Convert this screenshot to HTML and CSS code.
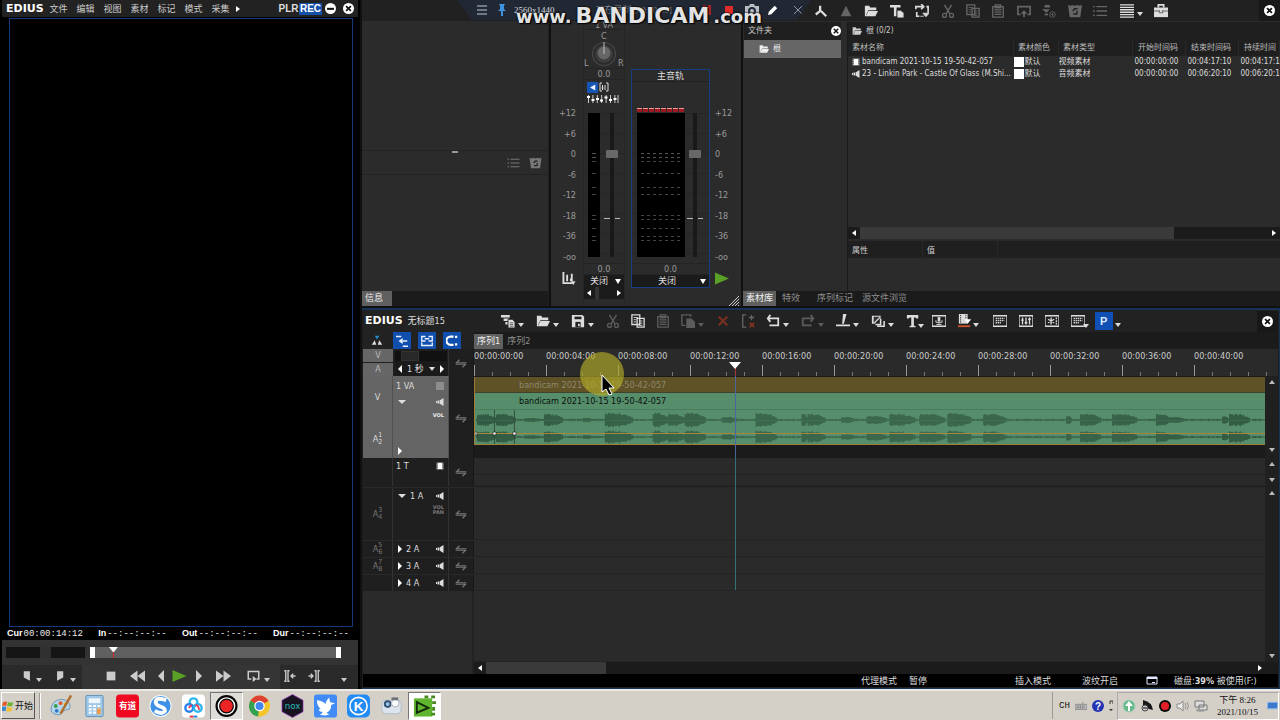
FILE: index.html
```html
<!DOCTYPE html>
<html lang="zh-CN">
<head>
<meta charset="utf-8">
<title>EDIUS</title>
<link rel="stylesheet" href="styles.css">
</head>
<body>
<svg class="defs" aria-hidden="true">
  <symbol id="close" viewBox="0 0 16 16"><circle cx="8" cy="8" r="8" fill="#fff"/><path d="M4.500 4.500l7 7m0-7l-7 7" stroke="#111" stroke-width="2.400"/></symbol>
  <symbol id="minus" viewBox="0 0 16 16"><circle cx="8" cy="8" r="8" fill="#fff"/><path d="M3 8.500h10" stroke="#111" stroke-width="3"/></symbol>
  <symbol id="folder" viewBox="0 0 16 16"><path d="M1 2h5l1 2h7v3H5l-2 4-1 3H1z" fill="currentColor"/><path d="M5 8h11l-3 6H2z" fill="currentColor"/></symbol>
  <symbol id="film" viewBox="0 0 16 16"><path d="M1 1h14v14H1z" fill="#aaa"/><path d="M4 2h8v12H4z" fill="#fff"/><path d="M2 2v12M14 2v12" stroke="#333" stroke-width="1.500" stroke-dasharray="2 2"/></symbol>
  <symbol id="speaker" viewBox="0 0 16 16"><path d="M15 0v16L7 11V5zM3 5h3v6H3zM0 6h2v4H0z" fill="currentColor"/></symbol>
  <symbol id="cut" viewBox="0 0 16 16"><path d="M4 1l6 10M12 1L6 11" stroke="currentColor" stroke-width="1.600" fill="none"/><circle cx="4" cy="13" r="2.200" fill="none" stroke="currentColor" stroke-width="1.500"/><circle cx="12" cy="13" r="2.200" fill="none" stroke="currentColor" stroke-width="1.500"/></symbol>
  <symbol id="copy" viewBox="0 0 16 16"><path d="M1 1h9v11H1zM7 5h8v10H7z" fill="#222" stroke="currentColor" stroke-width="1.500"/><path d="M3 4h5M3 6.500h3M3 9h3M9 8h4M9 10.500h4M9 13h4" stroke="currentColor"/></symbol>
  <symbol id="clipboard" viewBox="0 0 16 16"><path d="M2 3h12v12H2zM5 1h6v3H5z" fill="none" stroke="currentColor" stroke-width="1.500"/><path d="M4 6h8M4 8h8M4 10h8M4 12h8" stroke="currentColor" stroke-width="1.200"/></symbol>
  <symbol id="trash" viewBox="0 0 16 16"><path d="M0 1l2 14h12l2-14-3 1-2-1-3 1-3-1-2 1z" fill="currentColor"/><path d="M11 5.500H7.500L5.500 8M10.500 8l-.5 3.500H6" fill="none" stroke="#222" stroke-width="1.700"/></symbol>
  <symbol id="list" viewBox="0 0 16 16"><path d="M4 3h12M4 8h12M4 13h12" stroke="currentColor" stroke-width="1.500"/><path d="M0 3h2M0 8h2M0 13h2" stroke="currentColor" stroke-width="1.500"/></symbol>
  <symbol id="rows" viewBox="0 0 16 16"><path d="M0 1h16M0 3.800h16M0 6.600h16M0 9.400h16M0 12.200h16M0 15h16" stroke="currentColor" stroke-width="1.500"/></symbol>
  <symbol id="magnify" viewBox="0 0 16 16"><path d="M7 2v6l-5 4m6-4l6 6" stroke="currentColor" stroke-width="2.600" fill="none"/></symbol>
  <symbol id="up" viewBox="0 0 16 16"><path d="M8 2l6 12H2z" fill="currentColor"/></symbol>
  <symbol id="titlefile" viewBox="0 0 16 16"><path d="M0 1h12v3H7.500v10H4.500V4H0z" fill="currentColor"/><path d="M8 7h4l4 3v6H8z" fill="currentColor" stroke="#222"/></symbol>
  <symbol id="reload" viewBox="0 0 16 16"><path d="M1 6V3h8M7 0l3 3-3 3M13 3h2v7M5 14H2V9" fill="none" stroke="currentColor" stroke-width="1.900"/><path d="M6 14h4M9 10.500h7l-3.500 4z" fill="currentColor" stroke="currentColor"/></symbol>
  <symbol id="import" viewBox="0 0 16 16"><path d="M4 12H1V3h14v9h-3" fill="none" stroke="currentColor" stroke-width="1.800"/><path d="M8 7l4 4H9v4H7v-4H4z" fill="currentColor"/></symbol>
  <symbol id="addclip" viewBox="0 0 16 16"><path d="M3 1h6v3H3zM0 6h9L5 10z" fill="currentColor"/><path d="M3 12h4" stroke="currentColor" stroke-width="2"/><circle cx="12" cy="12" r="3.200" fill="none" stroke="currentColor"/><path d="M10.500 12h3M12 10.500v3" stroke="currentColor"/></symbol>
  <symbol id="case" viewBox="0 0 16 16"><path d="M5 4V1h6v3" fill="none" stroke="currentColor" stroke-width="2"/><path d="M0 4h16v11H0z" fill="currentColor"/><path d="M0 8h6M10 8h6M6 7v3h4V7" stroke="#555" fill="none"/></symbol>
  <symbol id="newseq" viewBox="0 0 16 16"><path d="M0 1h10v3H0zM3 5h6v3H3zM5 9h3v3H5z" fill="currentColor"/><path d="M8 6h5l3 3v7H8z" fill="currentColor" stroke="#222"/><path d="M10 10h4M10 12h4M10 14h4" stroke="#555"/></symbol>
  <symbol id="save" viewBox="0 0 16 16"><path d="M1 1h12l2 2v12H1z" fill="currentColor"/><path d="M4 3h8v3H4z" fill="#222"/><path d="M5 9h6v6H5z" fill="#222"/><path d="M8 11h2v3H8z" fill="currentColor"/></symbol>
  <symbol id="pastefile" viewBox="0 0 16 16"><path d="M5 13H1V1h10v2" fill="none" stroke="currentColor" stroke-width="1.600"/><path d="M6 5h6l4 4v7H6z" fill="currentColor"/></symbol>
  <symbol id="cross" viewBox="0 0 16 16"><path d="M3 3l10 10M13 3L3 13" stroke="currentColor" stroke-width="2.500"/></symbol>
  <symbol id="ripple" viewBox="0 0 16 16"><path d="M6 1H2v14h4M9 4h6M12 1v6" fill="none" stroke="#666" stroke-width="1.500"/><path d="M10 10l5 5m0-5l-5 5" stroke="#8a351d" stroke-width="1.800"/></symbol>
  <symbol id="undo" viewBox="0 0 16 16"><path d="M5 1L2 5l3 4M2 5h12v8H4" fill="none" stroke="currentColor" stroke-width="2"/></symbol>
  <symbol id="redo" viewBox="0 0 16 16"><path d="M11 1l3 4-3 4M14 5H2v8h10" fill="none" stroke="currentColor" stroke-width="2"/></symbol>
  <symbol id="razor" viewBox="0 0 16 16"><path d="M8 0h4L9 11H7zM0 12h16v2H0z" fill="currentColor"/></symbol>
  <symbol id="crop" viewBox="0 0 16 16"><path d="M1 2h10v2L4 11H1z" fill="currentColor"/><path d="M3 3v7l7-7z" fill="#333"/><path d="M11 5v7H5M7 14h8V8" stroke="currentColor" stroke-width="1.800" fill="none"/></symbol>
  <symbol id="title" viewBox="0 0 16 16"><path d="M1 1h13v4h-2l-1-1H9v9l2 1v1H4v-1l2-1V4H4L3 5H1z" fill="currentColor"/></symbol>
  <symbol id="mic" viewBox="0 0 16 16"><path d="M0 2h16v12H0z" fill="none" stroke="currentColor" stroke-width="1.600"/><path d="M6.500 3.500h3v5h-3z" fill="currentColor"/><path d="M4.500 7v2.500h7V7M8 9v3M5 12h6" fill="none" stroke="currentColor"/></symbol>
  <symbol id="render" viewBox="0 0 16 16"><path d="M1 0h10v11H1z" fill="currentColor"/><path d="M3 1v9M9 1v5" stroke="#222" stroke-dasharray="1.500 1"/><path d="M8 6h7l-4 5z" fill="#fff"/><path d="M0 14h14" stroke="#d4562b" stroke-width="2"/></symbol>
  <symbol id="panel" viewBox="0 0 16 16"><path d="M0 2h16v12H0z" fill="none" stroke="currentColor" stroke-width="1.500"/><path d="M3 5h10M3 7.500h10M3 10h6" stroke="currentColor" stroke-width="1.700" stroke-dasharray="1.500 .8"/></symbol>
  <symbol id="mixer" viewBox="0 0 16 16"><path d="M0 2h16v12H0z" fill="none" stroke="currentColor" stroke-width="1.500"/><path d="M4 4v8M8 4v8M12 4v8M2.500 7h3M6.500 10h3M10.500 6h3" stroke="currentColor" stroke-width="1.500"/></symbol>
  <symbol id="scope" viewBox="0 0 16 16"><path d="M0 2h16v12H0z" fill="none" stroke="currentColor" stroke-width="1.500"/><path d="M7 4v8M3.500 6l7 4M3.500 10l7-4M13 4v2M13 7v2M13 10v2" stroke="currentColor" stroke-width="1.500"/></symbol>
  <symbol id="swap" viewBox="0 0 16 12"><path d="M6 1L2 5h13M10 11l4-4H1" fill="none" stroke="currentColor" stroke-width="1.600"/></symbol>
  <symbol id="insync" viewBox="0 0 16 16"><path d="M5 1h6L8 6z" fill="#298bc8"/><path d="M1 13l4-6 2 6zM15 13l-4-6-2 6z" fill="#ddd"/></symbol>
  <symbol id="insert" viewBox="0 0 16 16"><path d="M0 2h7M9 15h7M5 8h10M9 5L5 8l4 3" fill="none" stroke="#e8f2ff" stroke-width="2"/></symbol>
  <symbol id="sync" viewBox="0 0 16 16"><path d="M6 2H1v6h5M10 2h5v6h-5M5 5h6M1 10v4h14v-4" fill="none" stroke="#e8f2ff" stroke-width="1.800"/></symbol>
  <symbol id="snap" viewBox="0 0 16 16"><path d="M10 2H6a5 5 0 0 0 0 11h4" fill="none" stroke="#fff" stroke-width="3"/><path d="M12 1h3v3h-3zM12 11h3v3h-3z" fill="#fff"/></symbol>
  <symbol id="marker" viewBox="0 0 16 16"><path d="M4 1h9v14L4 10z" fill="currentColor"/></symbol>
  <symbol id="stop" viewBox="0 0 16 16"><path d="M1 1h14v14H1z" fill="currentColor"/></symbol>
  <symbol id="rew" viewBox="0 0 16 12"><path d="M8 0v12L0 6zM16 0v12L8 6z" fill="currentColor"/></symbol>
  <symbol id="ff" viewBox="0 0 16 12"><path d="M0 0l8 6-8 6zM8 0l8 6-8 6z" fill="currentColor"/></symbol>
  <symbol id="prev" viewBox="0 0 8 12"><path d="M7 0v12L1 6z" fill="currentColor"/></symbol>
  <symbol id="next" viewBox="0 0 8 12"><path d="M1 0l6 6-6 6z" fill="currentColor"/></symbol>
  <symbol id="loop" viewBox="0 0 16 16"><path d="M5 12H1V2h14v10h-3" fill="none" stroke="currentColor" stroke-width="2"/><path d="M7 8l5 4-5 4z" fill="currentColor"/></symbol>
  <symbol id="goin" viewBox="0 0 16 16"><path d="M1 1h2v14H1M8 1H6v14h2M10 8h6M13 5l-3 3 3 3" fill="none" stroke="currentColor" stroke-width="1.800"/></symbol>
  <symbol id="goout" viewBox="0 0 16 16"><path d="M15 1h-2v14h2M8 1h2v14H8M0 8h6M3 5l3 3-3 3" fill="none" stroke="currentColor" stroke-width="1.800"/></symbol>
</svg>

<div class="desktop">
  <main class="workspace">
    <section class="player">
      <header class="player-head">
        <b class="brand">EDIUS</b>
        <nav class="menu"><button>文件</button><button>编辑</button><button>视图</button><button>素材</button><button>标记</button><button>模式</button><button>采集</button><i class="caret right"></i></nav>
        <button class="mode">PLR</button><button class="mode on">REC</button>
        <button class="round" aria-label="最小化"><svg><use href="#minus"/></svg></button>
        <button class="round" aria-label="关闭"><svg><use href="#close"/></svg></button>
      </header>
      <div class="screen"></div>
      <div class="timecodes"><span><b>Cur</b>00:00:14:12</span><span><b>In</b>--:--:--:--</span><span><b>Out</b>--:--:--:--</span><span><b>Dur</b>--:--:--:--</span></div>
      <div class="scrub">
        <input class="jog" type="range" value="50" aria-label="慢速搜索">
        <input class="seek" type="range" value="6" aria-label="播放位置">
      </div>
      <div class="transport">
        <div class="tgroup marks"><button aria-label="入点"><svg><use href="#marker"/></svg><i class="caret"></i></button><button class="flip" aria-label="出点"><svg><use href="#marker"/></svg><i class="caret"></i></button></div>
        <div class="tgroup plays"><button aria-label="停止"><svg class="i10"><use href="#stop"/></svg></button><button aria-label="快退"><svg><use href="#rew"/></svg></button><button aria-label="上一帧"><svg class="i10"><use href="#prev"/></svg></button><button class="go" aria-label="播放"><svg viewBox="0 0 14 12"><path d="M0 0l14 6-14 6z" fill="#5aa027"/></svg></button><button aria-label="下一帧"><svg class="i10"><use href="#next"/></svg></button><button aria-label="快进"><svg><use href="#ff"/></svg></button><button aria-label="循环"><svg><use href="#loop"/></svg><i class="caret"></i></button></div>
        <div class="tgroup edits"><button aria-label="到入点"><svg><use href="#goin"/></svg></button><button aria-label="到出点"><svg><use href="#goout"/></svg></button><button aria-label="更多"><i class="caret"></i></button></div>
      </div>
    </section>

    <div class="side">
      <div class="upper">
        <div class="toolbar">
          <div class="bin-tools">
            <button class="lit" aria-label="搜索"><svg><use href="#magnify"/></svg></button><button aria-label="向上"><svg><use href="#up"/></svg></button><button class="lit" aria-label="打开"><svg><use href="#folder"/></svg></button><button class="lit" aria-label="新建字幕"><svg><use href="#titlefile"/></svg></button><button class="lit" aria-label="新建素材"><svg><use href="#reload"/></svg></button><button aria-label="剪切"><svg><use href="#cut"/></svg></button><button aria-label="复制"><svg><use href="#copy"/></svg></button><button aria-label="粘贴"><svg><use href="#clipboard"/></svg></button><button aria-label="播放器"><svg><use href="#import"/></svg></button><button aria-label="添加"><svg><use href="#addclip"/></svg></button><button aria-label="删除"><svg><use href="#trash"/></svg></button><button aria-label="属性"><svg><use href="#list"/></svg></button><button class="lit" aria-label="视图"><svg><use href="#rows"/></svg><i class="caret"></i></button>
          </div>
          <button class="lit case" aria-label="工具"><svg><use href="#case"/></svg></button>
          <button class="round end" aria-label="关闭"><svg><use href="#close"/></svg></button>
        </div>
        <div class="capture">
          <svg class="c-menu" viewBox="0 0 10 10"><path d="M0 1h10M0 5h10M0 9h10" stroke="#bcc8d8"/></svg>
          <svg class="c-pin" viewBox="0 0 8 12"><path d="M1 0h6L6 2v3l2 2H0l2-2V2zM3 7h2v5H3z" fill="#3f92dc"/></svg>
          <span>2560x1440</span><span class="rec">正在录制 [00:00:50]</span>
          <svg class="c-pause" viewBox="0 0 8 10"><path d="M0 0h3v10H0zM5 0h3v10H5z" fill="#a82425"/></svg>
          <svg class="c-stop" viewBox="0 0 8 8"><path d="M0 0h8v8H0z" fill="#e12b2b"/></svg>
          <svg class="c-cam" viewBox="0 0 14 12"><path d="M0 2h4l1-2h4l1 2h4v10H0z" fill="#b9bdc4"/><circle cx="7" cy="7" r="3" fill="none" stroke="#222b3a" stroke-width="2"/></svg>
          <svg class="c-pen" viewBox="0 0 12 12"><path d="M0 12l1-4 7-7 3 3-7 7z" fill="#fff"/></svg>
          <svg class="c-x" viewBox="0 0 8 8"><path d="M0 0l8 8M8 0L0 8" stroke="#8f98a6"/></svg>
        </div>
        <div class="watermark"><small>www.</small><b>BANDICAM</b><em>.com</em></div>

        <div class="panels">
          <section class="info">
            <div class="info-top"></div>
            <div class="info-bar"><i class="grip"></i><svg><use href="#list"/></svg><svg><use href="#trash"/></svg></div>
            <div class="info-body"></div>
            <div class="tabs"><button class="on">信息</button></div>
          </section>

          <section class="mix">
            <div class="scale left"><ol><li>+12</li><li>+6</li><li>0</li><li>-6</li><li>-12</li><li>-18</li><li>-36</li><li>-oo</li></ol>
              <svg class="bars" viewBox="0 0 14 14"><path d="M0 0h2v11h10v2H0zM4 3h2v7H4zM8 7h1v3H8zM9 2h2v8H9z" fill="#ddd"/><path d="M9 10h5l-2.500 4z" fill="#ddd"/></svg></div>
            <div class="channel">
              <div class="ch-name">1 VA</div>
              <div class="pan"><svg viewBox="0 0 40 38"><circle cx="20" cy="24" r="11.500" fill="none" stroke="#484848" stroke-width="1.200"/><circle cx="20" cy="24" r="9" fill="#3c3c3c"/><circle cx="20" cy="23" r="6.500" fill="#666"/><path d="M20 12v12" stroke="#bbb"/><text x="17" y="9">C</text><text x="0" y="36">L</text><text x="34" y="36">R</text></svg></div>
              <div class="num">0.0</div>
              <div class="mutes"><button class="mute" aria-label="静音"><svg viewBox="0 0 8 8"><path d="M7 0v8L0 4z" fill="#eaf2ff"/></svg></button><button aria-label="独奏"><svg viewBox="0 0 10 10"><path d="M3 1H1v8h2M7 1h2v8H7M3.500 3v5M6 3v5M2.500 6h2" fill="none" stroke="#ddd"/></svg></button></div>
              <svg class="eq" viewBox="0 0 32 8"><path d="M1.500 0v8M5.900 0v8M10.300 0v8M14.700 0v8M19.100 0v8M23.500 0v8M27.900 0v8M31 0v8" stroke="#ccc"/><path d="M0 2h3M4.500 5h3M9 4h3M13 5.500h3M17.500 2.500h3M22 5h3M26.500 4h3" stroke="#fff" stroke-width="2"/></svg>
              <div class="fader"><div class="meter one"></div><div class="slide"><input type="range" value="73" aria-label="1 VA 音量"></div></div>
              <div class="num">0.0</div>
              <label class="pick"><select aria-label="1 VA 自动化"><option>关闭</option></select></label>
              <div class="mini-scroll"><i class="caret lefts"></i><b></b><i class="caret right"></i></div>
            </div>
            <div class="channel master">
              <div class="ch-name">主音轨</div>
              <div class="gap"></div>
              <div class="fader"><div class="meter eight"></div><div class="slide"><input type="range" value="73" aria-label="主音轨音量"></div></div>
              <div class="num">0.0</div>
              <label class="pick"><select aria-label="主音轨自动化"><option>关闭</option></select></label>
            </div>
            <div class="scale"><ol><li>+12</li><li>+6</li><li>0</li><li>-6</li><li>-12</li><li>-18</li><li>-36</li><li>-oo</li></ol>
              <svg class="bars" viewBox="0 0 14 12"><path d="M0 0l14 6-14 6z" fill="#5aa027"/></svg></div>
            <svg class="sizer" viewBox="0 0 10 10"><path d="M0 10L10 0M3 10l7-7M6 10l4-4M9 10l1-1" stroke="#ccc"/></svg>
          </section>

          <section class="bin">
            <div class="bin-main">
              <div class="tree">
                <div class="bin-head"><span>文件夹</span><button class="round" aria-label="关闭"><svg><use href="#close"/></svg></button></div>
                <div class="tree-row"><svg><use href="#folder"/></svg>根</div>
              </div>
              <div class="files">
                <div class="bin-head"><svg><use href="#folder"/></svg><span>根 (0/2)</span></div>
                <table class="clips">
                  <colgroup><col><col class="w45"><col class="w74"><col class="w53"><col class="w53"><col class="w40"></colgroup>
                  <thead><tr><th>素材名称</th><th>素材颜色</th><th>素材类型</th><th class="r">开始时间码</th><th class="r">结束时间码</th><th class="r">持续时间</th></tr></thead>
                  <tbody>
                    <tr><td><svg><use href="#film"/></svg>bandicam 2021-10-15 19-50-42-057</td><td><i class="chip"></i>默认</td><td>视频素材</td><td class="r">00:00:00:00</td><td class="r">00:04:17:10</td><td class="r">00:04:17:10</td></tr>
                    <tr><td><svg><use href="#speaker"/></svg>23 - Linkin Park - Castle Of Glass (M.Shi...</td><td><i class="chip"></i>默认</td><td>音频素材</td><td class="r">00:00:00:00</td><td class="r">00:06:20:10</td><td class="r">00:06:20:10</td></tr>
                  </tbody>
                </table>
                <div class="files-space"></div>
                <div class="hscroll"><i class="caret lefts"></i><b></b><i class="caret right"></i></div>
                <div class="props"><span>属性</span><span>值</span></div>
                <div class="props-body"></div>
              </div>
            </div>
            <div class="tabs"><button class="on">素材库</button><button>特效</button><button class="wide">序列标记</button><button>源文件浏览</button></div>
          </section>
        </div>
      </div>

      <section class="timeline">
        <div class="tl-head">
          <b class="brand">EDIUS</b><span class="project">无标题15</span>
          <div class="tools a"><button class="m"><svg><use href="#newseq"/></svg><i class="caret"></i></button><button class="m"><svg><use href="#folder"/></svg><i class="caret"></i></button><button class="m"><svg class="i13"><use href="#save"/></svg><i class="caret"></i></button><button class="dim"><svg><use href="#cut"/></svg></button><button><svg><use href="#copy"/></svg></button><button class="dim"><svg><use href="#clipboard"/></svg></button><button class="m dim"><svg><use href="#pastefile"/></svg><i class="caret"></i></button><button class="red"><svg><use href="#cross"/></svg></button><button><svg><use href="#ripple"/></svg></button><button class="m"><svg><use href="#undo"/></svg><i class="caret"></i></button><button class="m dim"><svg><use href="#redo"/></svg><i class="caret"></i></button><button class="m"><svg><use href="#razor"/></svg><i class="caret"></i></button><button class="m"><svg><use href="#crop"/></svg><i class="caret"></i></button></div>
          <div class="tools b"><button><svg><use href="#title"/></svg><i class="caret"></i></button><button><svg><use href="#mic"/></svg></button><button class="m"><svg><use href="#render"/></svg><i class="caret"></i></button><button><svg><use href="#panel"/></svg></button><button><svg><use href="#mixer"/></svg></button><button><svg><use href="#scope"/></svg></button><button><svg><use href="#panel"/></svg><i class="caret"></i></button><button class="m p"><b>P</b><i class="caret"></i></button></div>
          <button class="round end" aria-label="关闭"><svg><use href="#close"/></svg></button>
        </div>
        <div class="tl-modes">
          <div class="modes"><button class="plain"><svg><use href="#insync"/></svg></button><button><svg><use href="#insert"/></svg></button><button><svg><use href="#sync"/></svg></button><button><svg><use href="#snap"/></svg></button></div>
          <div class="tabs"><button class="on">序列1</button><button>序列2</button></div>
        </div>
        <div class="tl-body">
          <div class="row ruler-row">
            <div class="va"><button>V</button><button>A</button></div>
            <div class="zoom"><div class="zbar"><b></b></div><div class="zsel"><i class="caret lefts"></i><span>1 秒</span><i class="caret"></i><i class="caret right"></i></div></div>
            <div class="link"><svg><use href="#swap"/></svg></div>
            <div class="ruler"><span>00:00:00:00</span><span>00:00:04:00</span><span>00:00:08:00</span><span>00:00:12:00</span><span>00:00:16:00</span><span>00:00:20:00</span><span>00:00:24:00</span><span>00:00:28:00</span><span>00:00:32:00</span><span>00:00:36:00</span><span>00:00:40:00</span></div>
          </div>
          <div class="band">
            <div class="row va-row">
              <div class="patch lit2"><span>V</span><span class="ch">A<i><sup>1</sup><sub>2</sub></i></span></div>
              <div class="name lit2"><div><span>1 VA</span><svg class="grey" viewBox="0 0 8 8"><path d="M0 0h8v8H0z" fill="#8c8c8c"/></svg></div><div><i class="caret big"></i><svg><use href="#speaker"/></svg></div><div class="vol">VOL</div><div class="tail"><i class="caret right big"></i></div></div>
              <div class="link"><svg><use href="#swap"/></svg></div>
              <div class="lane clip-lane">
                <div class="clip">
                  <div class="video">bandicam 2021-10-15 19-50-42-057</div>
                  <div class="audio"><span>bandicam 2021-10-15 19-50-42-057</span><svg id="wave" viewBox="0 0 791 34" preserveAspectRatio="none"></svg></div>
                </div>
              </div>
            </div>
            <div class="vscroll"><i class="caret ups"></i><i class="caret"></i></div>
          </div>
          <div class="band t-band">
            <div class="row t-row"><div class="patch"></div><div class="name"><div><span>1 T</span><svg><use href="#film"/></svg></div></div><div class="link"><svg><use href="#swap"/></svg></div><div class="lane split"></div></div>
            <div class="vscroll"><i class="caret ups"></i><i class="caret"></i></div>
          </div>
          <div class="band rest">
            <div class="stack">
              <div class="row a1"><div class="patch"><span class="ch">A<i><sup>3</sup><sub>4</sub></i></span></div><div class="name"><div><i class="caret big"></i><span>1 A</span><svg><use href="#speaker"/></svg></div><div class="vol off">VOL<br>PAN</div></div><div class="link"><svg><use href="#swap"/></svg></div><div class="lane"></div></div>
              <div class="row an"><div class="patch"><span class="ch">A<i><sup>5</sup><sub>6</sub></i></span></div><div class="name"><div><i class="caret right big"></i><span>2 A</span><svg><use href="#speaker"/></svg></div></div><div class="link"><svg><use href="#swap"/></svg></div><div class="lane"></div></div>
              <div class="row an"><div class="patch"><span class="ch">A<i><sup>7</sup><sub>8</sub></i></span></div><div class="name"><div><i class="caret right big"></i><span>3 A</span><svg><use href="#speaker"/></svg></div></div><div class="link"><svg><use href="#swap"/></svg></div><div class="lane"></div></div>
              <div class="row an"><div class="patch"></div><div class="name"><div><i class="caret right big"></i><span>4 A</span><svg><use href="#speaker"/></svg></div></div><div class="link"><svg><use href="#swap"/></svg></div><div class="lane"></div></div>
              <div class="row fill"><div class="blank"></div><div class="lane"></div></div>
            </div>
            <div class="vscroll"><i class="caret ups"></i><i class="caret"></i></div>
          </div>
          <div class="bottom"><div class="blank"></div><div class="hscroll"><i class="caret lefts"></i><b></b><i class="caret right"></i></div></div>
          <div class="playhead"><i></i></div>
          <svg class="pointer" viewBox="0 0 44 44"><circle cx="22" cy="22" r="22" fill="#b0a82a" fill-opacity=".68"/><path d="M22 23v17l4-3 3 6 3-1-3-6h5z" fill="#000" stroke="#fff"/></svg>
        </div>
        <footer class="status"><span class="s1">代理模式</span><span class="s2">暂停</span><span class="s3">插入模式</span><span class="s4">波纹开启</span><svg viewBox="0 0 12 9"><path d="M1 1h10v7H1z" fill="none" stroke="#dfe8ff"/><path d="M1 1h10v2H1zM6 6h3v1H6z" fill="#dfe8ff"/></svg><span>磁盘:<b>39%</b> 被使用(F:)</span></footer>
      </section>
    </div>
  </main>

  <footer class="taskbar">
    <button class="start"><svg viewBox="0 0 14 14"><path d="M1 3q3-2 5-1L5 7Q3 6 0 7z" fill="#e4572b"/><path d="M7 2q3 2 6 0l-1 5q-3 1-6 0z" fill="#71b33a"/><path d="M0 8q3-1 5 0l-1 5q-3-1-4 0z" fill="#3884d0"/><path d="M6 8q3 2 6 0l-1 5q-3 1-6 0z" fill="#f4bd2c"/></svg>开始</button>
    <i class="sep"></i>
    <div class="apps">
      <button aria-label="画图"><svg viewBox="0 0 24 24"><path d="M1 15Q2 6 12 5q9 1 9 8 0 3-4 3-3 0-4 3-2 3-6 2-6-1-6-6z" fill="#b3d6ec" stroke="#7195b3"/><circle cx="6" cy="12" r="2" fill="#3b9e4a"/><circle cx="11" cy="9" r="2" fill="#e4582c"/><circle cx="16" cy="10" r="2" fill="#efbd32"/><circle cx="7" cy="17" r="2" fill="#3576c5"/><path d="M22 1L11 20" stroke="#b06c2c" stroke-width="2.500"/></svg></button>
      <button aria-label="计算器"><svg viewBox="0 0 24 24"><rect x="3" y="1" width="18" height="22" rx="1" fill="#9fc8e8" stroke="#6390b6"/><path d="M6 4h12v5H6z" fill="#eff7fb"/><path d="M6 12h12M6 15.500h12M6 19h12" stroke="#f8fcff" stroke-width="2.300" stroke-dasharray="3 1.500"/><path d="M14.500 14.500h4v6h-4z" fill="#ed9c45"/></svg></button>
      <button aria-label="有道"><svg viewBox="0 0 24 24"><rect width="24" height="24" rx="4" fill="#ef0a22"/><text x="12" y="15" class="logo-cn">有道</text></svg></button>
      <button aria-label="搜狗"><svg viewBox="0 0 24 24"><circle cx="12" cy="12" r="11.500" fill="#f4f8fc"/><circle cx="12" cy="12" r="10.500" fill="#3f91e6"/><path d="M18 6Q7 2 7 8q0 3 6 5 5 2 3 5-3 3-10-1" fill="none" stroke="#fff" stroke-width="4"/></svg></button>
      <button aria-label="网盘"><svg viewBox="0 0 24 24"><rect width="24" height="24" rx="4" fill="#fff"/><circle cx="12" cy="8" r="4" fill="none" stroke="#2bb7ee" stroke-width="2.500"/><circle cx="7.500" cy="14" r="4" fill="none" stroke="#2481ed" stroke-width="2.500"/><circle cx="16.500" cy="14" r="4" fill="none" stroke="#2bb7ee" stroke-width="2.500"/><path d="M10 11l-3 3m7-3q3 0 4 5" stroke="#ef3d59" stroke-width="2" fill="none"/><path d="M8 23h4" stroke="#e34" stroke-width="2"/><path d="M12 23h4" stroke="#28d" stroke-width="2"/></svg></button>
      <button class="run" aria-label="录制"><svg viewBox="0 0 24 24"><circle cx="12" cy="12" r="11.500" fill="#050505"/><circle cx="12" cy="12" r="8.500" fill="none" stroke="#fff" stroke-width="1.500"/><circle cx="12" cy="12" r="6.500" fill="#ed2424"/></svg></button>
      <button aria-label="浏览器"><svg viewBox="0 0 24 24"><circle cx="12" cy="12" r="11" fill="#f3c42b"/><path d="M12 12L2.500 6.500A11 11 0 0 1 21.500 6.500z" fill="#dd4334"/><path d="M12 12L2.500 6.500A11 11 0 0 0 10.500 23z" fill="#34a052"/><circle cx="12" cy="12" r="5.500" fill="#fff"/><circle cx="12" cy="12" r="4.200" fill="#4386ee"/></svg></button>
      <button aria-label="模拟器"><svg viewBox="0 0 24 24"><path d="M12 0l11 6v12l-11 6L1 18V6z" fill="#171321" stroke="#9d3ac5" stroke-width=".7"/><text x="12" y="15" class="logo-nox">nox</text></svg></button>
      <button aria-label="飞鸟"><svg viewBox="0 0 24 24"><rect width="24" height="24" rx="3" fill="#438bf4"/><path d="M3 6q7 1 9 4 1-5 4-7 0 3 1 5l5 1-4 2q0 6-5 8l3 2-5 1-5-1q3-1 3-3-4 0-4-3 1 1 2 0-4-3-4-9z" fill="#fff"/></svg></button>
      <button aria-label="酷狗"><svg viewBox="0 0 24 24"><rect width="24" height="24" rx="5" fill="#238bf4"/><circle cx="12" cy="12" r="9" fill="none" stroke="#fff" stroke-width="1.600"/><text x="12" y="17" class="logo-k">K</text></svg></button>
      <button aria-label="相机"><svg viewBox="0 0 24 24"><rect x="2" y="6" width="20" height="14" rx="4" fill="#dce5ee" stroke="#b0bdc8"/><circle cx="8" cy="10" r="4" fill="#345374"/><circle cx="8" cy="10" r="2" fill="#9cc6e7"/><circle cx="16" cy="9" r="4" fill="#f9fbfc" stroke="#aab"/><path d="M12 3h7v3h-7z" fill="#6c7279"/></svg></button>
      <button class="run white" aria-label="EDIUS"><svg viewBox="0 0 24 24"><path d="M1 4h19v19H1z" fill="#60b52f"/><path d="M4 8v11l12-5z" fill="none" stroke="#122a0a" stroke-width="2"/><path d="M19 1h4v3h-4zM12 1h4v3h-4zM20 7h4v3h-4zM20 13h3v4h-3zM19 19h4v3h-4z" fill="#47871f"/></svg></button>
    </div>
    <div class="lang"><span>CH</span><svg viewBox="0 0 14 10"><path d="M0 3h14v6H0zM8 3l2-3" fill="#bbb" stroke="#888"/><path d="M2 5h10M2 7h10" stroke="#555" stroke-dasharray="1 1"/></svg><svg viewBox="0 0 12 12"><circle cx="6" cy="6" r="6" fill="#2434b2"/><text x="6" y="10" class="logo-q">?</text></svg><svg class="tiny" viewBox="0 0 4 12"><path d="M1 4V1h3v3" fill="none" stroke="#333"/><path d="M0 9h4l-2 2z" fill="#333"/></svg></div>
    <div class="tray">
      <svg viewBox="0 0 14 14"><circle cx="7" cy="7" r="6" fill="#64b98a" stroke="#a6cfb8"/><path d="M7 2l4 5H8v5H6V7H3z" fill="#fff"/></svg>
      <svg viewBox="0 0 14 14"><path d="M3 1q9 2 10 10l-4-1L3 6z" fill="#171717"/><circle cx="5" cy="9" r="3" fill="#ccc" stroke="#444"/><path d="M3 9h4" stroke="#111"/></svg>
      <svg viewBox="0 0 14 14"><circle cx="7" cy="7" r="6" fill="#080808"/><circle cx="7" cy="7" r="4" fill="#e51f28"/></svg>
      <svg viewBox="0 0 14 14"><path d="M1 5h3l3-3v10L4 9H1z" fill="#eee" stroke="#888"/><path d="M9 4q2 3 0 6M11 3q3 4 0 8" fill="none" stroke="#999"/></svg>
      <svg viewBox="0 0 14 14"><path d="M1 2h9v6H1zM5 6h8v5H5z" fill="#ddd" stroke="#777"/><path d="M3 10v2h7" stroke="#888" fill="none"/></svg>
      <time><span>下午 8:26</span><span>2021/10/15</span></time>
      <svg class="desk" viewBox="0 0 12 10"><path d="M1 1h11l-1 7H0z" fill="#3c79ca" stroke="#8ab8ec"/></svg>
    </div>
  </footer>
</div>
<script src="app.js"></script>
</body>
</html>
```
FILE: styles.css
```css
* { box-sizing: border-box; }
body { margin: 0; background: #000; color: #ccc; font: 9px/12px "DejaVu Sans Condensed", "Open Sans", "Noto Sans CJK SC", sans-serif; }
button { margin: 0; padding: 0; border: 0; background: none; color: inherit; font: inherit; }
svg { display: block; width: 16px; height: 16px; flex: none; }
.defs { position: absolute; width: 0; height: 0; }
.caret { width: 0; height: 0; flex: none; border: 3px solid transparent; border-top: 4px solid #ddd; border-bottom: 0; }
.caret.right { border: 3px solid transparent; border-left: 4px solid #fff; border-right: 0; }
.caret.lefts { border: 3px solid transparent; border-right: 4px solid #fff; border-left: 0; }
.caret.ups { border: 3px solid transparent; border-bottom: 4px solid #bbb; border-top: 0; }
.caret.big { border-width: 4px; border-bottom-width: 0; }
.caret.right.big { border-width: 4px; border-right-width: 0; }
.round svg { width: 11px; height: 11px; }
.brand { color: #fff; font: bold 11px/16px "DejaVu Sans", sans-serif; }

.desktop { min-height: 100vh; display: flex; flex-direction: column; }
.workspace { flex: 1; display: flex; }

/* Player */
.player { flex: 0 0 360px; min-width: 0; display: flex; flex-direction: column; padding-left: 2px; padding-right: 2px; }
.player-head { height: 17px; background: #222; display: flex; align-items: center; padding-left: 4px; padding-right: 4px; }
.menu { flex: 1; min-width: 0; display: flex; align-items: center; padding-left: 6px; }
.menu button { width: 27px; flex: none; text-align: left; }
.menu .caret { margin-left: -3px; }
.mode { width: 21px; height: 12px; color: #ddd; font: bold 10px/12px "Liberation Sans", sans-serif; }
.mode.on { width: 23px; background: #1550a8; color: #fff; }
.player-head .round { margin-left: 7px; }
.player-head .mode + .round { margin-left: 3px; }
.screen { flex: 1; margin: 1px 5px 0 7px; border: 1px solid #143a78; }
.timecodes { height: 13px; display: flex; justify-content: space-between; padding: 0 9px 0 5px; color: #eee; font: 9px/13px "Liberation Mono", monospace; }
.timecodes b { font: bold 9px/13px "Liberation Sans", sans-serif; margin-right: 1px; color: #fff; }
.scrub { height: 25px; background: #333; display: flex; align-items: center; gap: 5px; padding: 0 17px 0 4px; }
.scrub input { appearance: none; margin: 0; height: 11px; }
.jog { width: 79px; background: #151515; }
.jog::-webkit-slider-thumb { appearance: none; width: 11px; height: 11px; background: #303030; }
.seek { flex: 1; min-width: 0; background: #606060; border-left: 5px solid #fff; border-right: 5px solid #fff; }
.seek::-webkit-slider-thumb { appearance: none; width: 9px; height: 11px; background: linear-gradient(#fff 5px, #d02323 5px); clip-path: polygon(0 0, 100% 0, 5px 5px, 5px 11px, 4px 11px, 4px 5px); }
.transport { height: 24px; background: #353535; display: flex; color: #ccc; }
.transport svg { width: 15px; height: 12px; }
.transport .i10 { width: 10px; }
.transport button { display: flex; align-items: center; justify-content: center; gap: 3px; height: 22px; }
.transport .caret { margin-top: 8px; border-top-color: #ccc; }
.marks { background: #2a2a2a; flex: 0 0 80px; display: flex; justify-content: space-around; padding-left: 12px; }
.marks button { gap: 4px; }
.transport .marks svg { width: 11px; }
.marks .flip svg { transform: scaleX(-1); }
.plays { flex: 1; min-width: 0; display: grid; grid-template-columns: 31px 23px 23px 15px 23px 26px 1fr; padding-left: 13px; }
.edits { flex: 0 0 78px; background: #2a2a2a; display: grid; grid-template-columns: 19px 31px 1fr; }

/* Upper panels */
.side { flex: 1; min-width: 0; display: flex; flex-direction: column; border-left: 2px solid #101010; background: #1d1d1d; }
.upper { position: relative; display: flex; flex-direction: column; height: 308px; }
.toolbar { height: 21px; display: flex; align-items: center; justify-content: flex-end; background: #212121; color: #666; }
.toolbar .lit { color: #ddd; }
.bin-tools { width: 330px; display: grid; grid-template-columns: repeat(13, 1fr); }
.bin-tools button { display: flex; align-items: center; justify-content: center; }
.bin-tools svg { width: 14px; height: 14px; }
.bin-tools .caret { margin: 6px -12px 0 3px; }
.case { margin-left: 16px; }
.case svg { width: 14px; height: 14px; }
.end { margin-left: auto; width: 21px; height: 21px; background: #181818; padding-left: 5px; flex: none; }
.toolbar .end { margin-left: 91px; }
.capture { position: absolute; top: 0; left: 95px; width: 354px; height: 20px; padding-left: 20px; display: flex; align-items: center; background: #222833; clip-path: polygon(0 0, 100% 0, 340px 20px, 15px 20px); color: #d5d8dd; font-family: "Liberation Serif", "Noto Sans CJK SC", serif; }
.capture svg { width: 10px; height: 10px; }
.capture .c-pin { width: 8px; height: 12px; margin: 0 8px 0 11px; }
.capture .rec { margin-left: 41px; white-space: nowrap; color: #868b94; }
.capture .c-pause { width: 8px; margin-left: auto; }
.capture .c-stop { width: 8px; height: 8px; margin-left: 14px; }
.capture .c-cam { width: 14px; height: 12px; margin-left: 12px; }
.capture .c-pen { margin-left: 9px; }
.capture .c-x { width: 8px; height: 8px; margin: 0 9px 0 16px; }
.watermark { position: absolute; z-index: 3; top: 5px; left: 154px; display: flex; gap: 4px; align-items: baseline; white-space: nowrap; color: #e3e3e3; font: bold 22px/22px "DejaVu Sans", sans-serif; text-shadow: 0 0 2px #000, 0 0 2px #000, 1px 1px 1px #000; }
.watermark small { font-size: 18px; }
.watermark em { font-size: 18px; font-style: normal; }
.panels { flex: 1; display: flex; min-height: 0; gap: 2px; padding-bottom: 2px; background: #101010; }
.panels > section { background: #2b2b2b; }
.tabs { display: flex; height: 15px; background: #1b1b1b; }
.tabs button { padding: 0 3px; color: #8e8e8e; line-height: 15px; }
.tabs .on { background: #606060; color: #eee; }
.tabs .wide { padding-left: 11px; }
.info { flex: 0 0 187px; display: flex; flex-direction: column; border-right: 1px solid #222; }
.info .on { width: 30px; text-align: left; }
.info-top { flex: 0 0 129px; }
.info-bar { position: relative; height: 25px; border: 1px solid #232323; border-width: 1px 0; display: flex; align-items: center; justify-content: flex-end; gap: 9px; padding-right: 6px; color: #777; }
.info-bar svg { width: 13px; height: 12px; }
.grip { position: absolute; top: 0; left: 90px; width: 6px; height: 2px; background: #999; }
.info-body { flex: 1; }
.mix { position: relative; flex: 0 0 188px; display: flex; color: #999; }
.scale { flex: 0 0 31px; padding-top: 86px; padding-left: 5px; }
.scale ol { list-style: none; margin: 0; padding: 0; height: 156px; display: flex; flex-direction: column; justify-content: space-between; }
.scale.left { padding: 86px 7px 0 0; text-align: right; }
.bars { width: 14px; height: 13px; margin: 9px 0 0 0; }
.left .bars { margin-left: 11px; }
.channel { flex: 0 0 42px; display: flex; flex-direction: column; border: 1px solid #262626; border-width: 0 1px; text-align: center; }
.ch-name { height: 9px; line-height: 9px; border-bottom: 1px solid #222; }
.pan svg { width: 40px; height: 38px; fill: #999; font-size: 9px; }
.num { height: 12px; border: 1px solid #242424; border-width: 1px 0; line-height: 11px; }
.mutes { height: 14px; display: flex; align-items: center; padding-left: 3px; gap: 1px; }
.mutes svg { width: 10px; height: 10px; margin: auto; }
.mute { width: 11px; height: 11px; background: #1555b4; }
.mutes .mute svg { width: 6px; height: 7px; }
.eq { width: 32px; height: 8px; margin: 1px 0 4px 3px; }
.fader { height: 156px; padding: 6px 3px 6px 4px; display: flex; gap: 4px; background: repeating-linear-gradient(#262626 0 1px, transparent 1px 20px) 0 6px; }
.meter { background-color: #000; }
.one { width: 12px; }
.one::before, .eight::before { content: ""; display: block; margin: 40px 4px 0; height: 92px; background:
  linear-gradient(#555 0 1px, transparent 1px 4px, #555 4px 5px, transparent 5px 8px, #444 8px 9px, transparent 9px 20px, #444 20px 21px, transparent 21px 34px, #444 34px 35px, transparent 35px 41px, #444 41px 42px, transparent 42px 62px, #444 62px 63px, transparent 63px 66px, #444 66px 67px, transparent 67px 75px, #444 75px 76px, transparent 76px 83px, #444 83px 84px, transparent 84px 87px, #444 87px 88px, transparent 88px); }
.eight { width: 48px; position: relative; }
.eight::before { mask: repeating-linear-gradient(90deg, #000 0 3px, transparent 3px 6px); }
.eight::after { content: ""; position: absolute; top: -5px; left: 0; right: 0; height: 4px; background: repeating-linear-gradient(90deg, transparent 0 5px, #2b2b2b 5px 6px), linear-gradient(#e99 1px, #9b1820 1px); }
.slide { width: 16px; display: flex; justify-content: center; background: linear-gradient(90deg, #bbb 6px, transparent 6px 11px, #bbb 11px) 0 105px / 16px 1px no-repeat; }
.slide input { appearance: none; writing-mode: vertical-lr; direction: rtl; width: 12px; height: 144px; margin: 0; background: linear-gradient(90deg, transparent 4px, #191919 4px 8px, transparent 8px); }
.slide input::-webkit-slider-thumb { appearance: none; width: 12px; height: 8px; border-radius: 1px; background: #686868; }
.pick { position: relative; height: 12px; background: #1b1b1b; display: block; }
.pick select { appearance: none; display: block; width: 100%; height: 12px; border: 0; padding: 0 0 0 6px; background: none; color: #ddd; font: inherit; }
.pick::after { content: ""; position: absolute; right: 3px; top: 4px; border: 3px solid transparent; border-top: 5px solid #fff; border-bottom: 0; }
.mini-scroll { height: 12px; display: flex; align-items: center; background: #1b1b1b; padding: 0 3px; }
.mini-scroll b { width: 4px; height: 12px; margin: 0 auto 0 4px; background: #333; }
.master { flex-basis: 79px; margin: 48px 0 18px 6px; border: 1px solid #173f80; }
.master .ch-name { height: 12px; line-height: 12px; color: #ddd; }
.master .gap { flex: 1; }
.master .fader { padding-left: 5px; gap: 2px; }
.master .pick select { padding-left: 26px; }
.sizer { position: absolute; right: 2px; bottom: 0; width: 10px; height: 10px; }

/* Bin */
.bin { flex: 1; min-width: 0; display: flex; flex-direction: column; padding-top: 1px; font-size: 8px; }
.bin-main { flex: 1; display: flex; min-height: 0; }
.bin .tabs { font-size: 9px; gap: 3px; }
.tree { flex: 0 0 105px; padding: 0 6px 0 1px; border-right: 1px solid #1a1a1a; }
.bin-head { height: 18px; background: #1f1f1f; display: flex; align-items: center; gap: 4px; padding-left: 4px; color: #ccc; }
.tree .bin-head { justify-content: space-between; }
.bin-head > svg, .tree-row svg { width: 10px; height: 10px; }
.tree .round svg { width: 10px; height: 10px; }
.tree-row { height: 18px; background: #666; display: flex; align-items: center; gap: 4px; padding-left: 15px; color: #eee; }
.files { flex: 1; min-width: 0; display: flex; flex-direction: column; }
.clips { table-layout: fixed; width: 100%; border-collapse: collapse; line-height: 12px; color: #ddd; }
.clips th { height: 16px; padding: 0 4px; background: #1f1f1f; text-align: left; font-weight: normal; color: #bbb; border-right: 1px solid #2a2a2a; white-space: nowrap; overflow: hidden; }
.clips td { height: 12px; padding: 0; white-space: nowrap; overflow: hidden; }
.clips td:first-child { padding-left: 4px; }
.clips td svg { display: inline-block; vertical-align: middle; width: 8px; height: 8px; margin-right: 2px; }
.clips .r { padding: 0 0 0 2px; }
.clips th.r { padding-left: 5px; }
.chip { display: inline-block; width: 10px; height: 10px; margin-right: 1px; background: #fff; vertical-align: middle; }
.w45 { width: 45px; } .w74 { width: 74px; } .w53 { width: 53px; } .w40 { width: 41px; }
.files-space { flex: 1; }
.hscroll { height: 12px; display: flex; align-items: center; padding: 0 4px; background: #1b1b1b; }
.hscroll b { height: 12px; width: 74%; margin: 0 auto 0 4px; background: #3a3a3a; }
.props { height: 18px; margin-top: 1px; display: flex; line-height: 20px; background: #1f1f1f; color: #ccc; border-top: 1px solid #292929; }
.props span { width: 75px; padding-left: 4px; border-right: 1px solid #292929; }
.props-body { flex: 0 0 33px; }

/* Timeline */
.timeline { flex: 1; display: flex; flex-direction: column; padding: 0 1px 1px; border: 1px solid #173258; border-width: 2px 1px 1px 0; background: #1f1f1f; }
.tl-head { height: 22px; display: flex; align-items: center; padding-left: 2px; background: #222; }
.project { width: 96px; padding-left: 5px; color: #ddd; }
.tools { display: flex; color: #ddd; }
.tools button { position: relative; width: 25px; height: 20px; display: flex; align-items: center; padding-left: 2px; }
.tools.b button { width: 26px; }
.tools button.m { width: 35px; }
.tools svg { width: 14px; height: 14px; }
.tools .caret { margin: 8px 0 0 3px; border-top-color: currentColor; }
.tools.b .caret { margin-left: 1px; }
.tools.b button:first-child .caret, .tools.b button:nth-child(7) .caret { position: absolute; left: 14px; bottom: 3px; margin: 0; }
.tools .dim { color: #5c5c5c; }
.tools .red { color: #74301e; }
.tools.b .p { padding-left: 0; }
.tools .p b { width: 18px; height: 18px; background: #1050b4; font: bold 11px/18px "Liberation Sans", sans-serif; color: #dce9ff; }
.tools.b .p .caret { margin-left: 2px; }
.tl-modes { height: 17px; display: flex; background: #1b1b1b; }
.modes { flex: 0 0 111px; display: flex; gap: 7px; background: #222; padding-left: 5px; }
.modes button { width: 18px; height: 17px; background: #104fae; }
.modes .plain { background: none; }
.modes svg { width: 12px; height: 12px; margin: auto; }
.tl-modes .tabs { margin-top: 2px; flex: 1; gap: 1px; }
.tl-body { position: relative; flex: 1; display: flex; flex-direction: column; }
.row { display: grid; grid-template-columns: 30px 56px 25px 1fr; flex: none; }
.ruler-row { height: 27px; }
.va { display: grid; grid-template-rows: 1fr 1fr; gap: 1px; padding-bottom: 1px; }
.va button { background: #666; color: #bbb; line-height: 13px; }
.zoom { padding: 2px 1px 0 2px; border-right: 1px solid #333; }
.zbar { height: 10px; background: #111; padding-left: 6px; }
.zbar b { display: block; width: 18px; height: 10px; background: #282828; border: 1px solid #333; }
.zsel { height: 15px; display: flex; align-items: center; justify-content: space-between; padding: 0 3px; color: #ddd; background: #1b1b1b; white-space: nowrap; }
.zsel .lefts { border-width: 4px; border-left-width: 0; } .zsel .right { border-width: 4px; border-right-width: 0; }
.link { display: flex; align-items: center; justify-content: center; color: #777; border-right: 1px solid #181818; }
.link svg { width: 12px; height: 9px; }
.ruler { display: flex; overflow: hidden; color: #ccc; background: repeating-linear-gradient(90deg, #777 0 1px, transparent 1px 18px) 0 100% / 100% 4px no-repeat #2a2a2a; border-bottom: 1px solid #181818; }
.ruler span { flex: 0 0 72px; line-height: 15px; background: linear-gradient(#999, #999) 0 100% / 1px 11px no-repeat; }
.band { display: flex; flex: none; }
.band > .row, .stack { flex: 1; min-width: 0; }
.vscroll { flex: 0 0 13px; display: flex; flex-direction: column; justify-content: space-between; align-items: center; padding: 4px 0; background: #202020; }
.vscroll .caret { border-top-color: #bbb; }
.vscroll .ups { border-top-width: 0; }
.va-row { height: 80px; }
.patch { display: flex; flex-direction: column; justify-content: space-around; align-items: center; background: #1f1f1f; color: #777; border-right: 1px solid #333; }
.ch { display: flex; align-items: center; font-style: normal; }
.ch i { display: flex; flex-direction: column; font-style: normal; }
.ch sup, .ch sub { font-size: 7px; line-height: 7px; vertical-align: baseline; }
.name { background: #1f1f1f; color: #ddd; padding: 2px 4px 2px 3px; border-right: 1px solid #333; }
.name > div { height: 16px; display: flex; align-items: center; gap: 4px; }
.name span { flex: 1; white-space: nowrap; }
.name .caret { margin: 0 auto 0 2px; }
.name .caret:has(+ span) { margin-right: 0; }
.name svg { width: 8px; height: 8px; }
.name .vol { justify-content: flex-end; height: 11px; font: bold 5px/5px "DejaVu Sans", sans-serif; text-align: right; color: #eee; }
.name .off { color: #777; }
.patch.lit2, .name.lit2 { background: #646464; color: #ddd; border-color: #505050; }
.name .tail { margin-top: 22px; }
.lane { background: #2a2a2a; border-bottom: 1px solid #242424; min-width: 0; }
.clip-lane { background: #1b1b1b; padding-top: 1px; }
.clip { border-bottom: 1px solid #a07c34; border-left: 1px solid #a07c34; }
.video { height: 16px; line-height: 16px; padding-left: 44px; background: #5e5226; color: #8e876c; border-bottom: 1px solid #40422c; }
.audio { height: 51px; background: linear-gradient(transparent 16px, #477d5b 16px 17px, transparent 17px) #568e6b; color: #0a0f0c; display: flex; flex-direction: column; }
.audio span { line-height: 17px; padding-left: 44px; }
.audio svg { width: 100%; height: 34px; }
.t-band { margin-top: 2px; }
.t-row { height: 28px; }
.t-row .name { padding-top: 0; }
.split { background: linear-gradient(#2a2a2a 16px, #222 16px 17px, #2a2a2a 17px); }
.rest { flex: 1; margin-top: 1px; }
.stack { display: flex; flex-direction: column; }
.stack .row { border-top: 1px solid #292929; }
.a1 { height: 53px; }
.a1 .name { padding-top: 0; }
.an { height: 17px; }
.an .name { padding-top: 0; padding-bottom: 0; }
.stack .fill { flex: 1; grid-template-columns: 111px 1fr; border: 0; }
.blank { background: #2a2a2a; border-right: 2px solid #222; }
.bottom { display: grid; grid-template-columns: 111px 1fr; }
.bottom .hscroll { padding-right: 16px; }
.bottom .hscroll b { width: 120px; }
.playhead { position: absolute; left: 372px; top: 13px; width: 1px; height: 228px; background: linear-gradient(#a33 14px, #4a65a0 14px 95px, #2f7378 95px); }
.playhead i { position: absolute; left: -6px; top: 0; border: 6px solid transparent; border-top: 7px solid #fff; border-bottom: 0; }
.pointer { position: absolute; left: 217px; top: 3px; width: 44px; height: 44px; }
.status { height: 13px; display: flex; align-items: center; background: #000; color: #ddd; padding-left: 498px; white-space: nowrap; }
.status svg { width: 12px; height: 9px; margin-right: 16px; }
.s1 { width: 48px; } .s2 { width: 106px; } .s3 { width: 67px; } .s4 { width: 64px; }

/* Taskbar */
.taskbar { height: 31px; border-top: 2px solid #eceae5; background: #d4d0c8; color: #111; display: flex; align-items: center; padding: 0 1px; }
.start { width: 34px; height: 27px; display: flex; align-items: center; gap: 1px; border: 1px solid #fff; border-right-color: #555; border-bottom-color: #555; white-space: nowrap; }
.start svg { width: 12px; height: 14px; }
.sep { width: 2px; height: 26px; margin: 0 6px 0 4px; border-left: 1px solid #999; border-right: 1px solid #fff; }
.apps { display: flex; flex: 1; margin-left: -2px; }
.apps button { width: 33px; height: 28px; display: flex; align-items: center; justify-content: center; border: 1px solid transparent; }
.apps svg { width: 23px; height: 24px; }
.apps .run { border-color: #777 #fff #fff #777; background: #dfddd8; }
.apps .white { background: #fff; }
.logo-cn { font: bold 9px "Noto Sans CJK SC", sans-serif; fill: #fff; text-anchor: middle; }
.logo-nox { font: 9px "DejaVu Sans", sans-serif; fill: #29bfb6; text-anchor: middle; }
.logo-k { font: bold 14px "Liberation Sans", sans-serif; fill: #fff; text-anchor: middle; }
.logo-q { font: bold 10px "Liberation Sans", sans-serif; fill: #fff; text-anchor: middle; }
.lang { width: 65px; height: 27px; display: flex; align-items: center; gap: 5px; padding-left: 6px; border-left: 1px solid #999; font-family: "Liberation Mono", monospace; }
.lang svg { width: 12px; height: 12px; }
.lang .tiny { width: 4px; }
.tray { width: 162px; height: 28px; display: flex; align-items: center; gap: 4px; padding-left: 4px; border: 1px solid #aaa; border-right-color: #fff; border-bottom-color: #fff; }
.tray svg { width: 14px; height: 14px; }
.tray time { flex: 1; display: flex; flex-direction: column; align-items: center; font-family: "Liberation Serif", "Noto Sans CJK SC", serif; white-space: nowrap; }
.tray .desk { width: 11px; height: 10px; }
```
FILE: app.js
```js
// Each burst: start x, end x, peak height of the sound.
const bursts = [
  [2, 20, 6], [21, 40, 6], [49, 67, 2], [69, 87, 6], [108, 118, 2], [130, 157, 7],
  [178, 192, 7], [193, 209, 6], [210, 230, 7], [247, 262, 3], [281, 301, 7],
  [327, 332, 6], [333, 350, 6], [367, 380, 3], [392, 412, 4], [415, 440, 6],
  [445, 470, 6], [473, 496, 7], [509, 531, 6], [592, 597, 4], [606, 626, 6],
  [638, 662, 6], [682, 696, 6], [697, 710, 3], [748, 754, 4], [755, 775, 6]
];
const svg = document.getElementById("wave");

function level(x) {
  const noise = Math.abs(Math.sin(x * 12.9898) * 43758.5) % 1;
  for (const [start, end, peak] of bursts) {
    if (x >= start && x <= end) {
      const t = (x - start) / (end - start);
      return Math.max(1, peak * (t < 0.55 ? 1 : 1.7 - t * 1.27) * (0.75 + noise * 0.3));
    }
  }
  return 0.4 + noise * 0.9;
}

function lane(center, gain) {
  let d = "";
  for (let x = 1; x < 791; x++) {
    const h = level(x) * gain;
    d += `M${x + 0.5} ${center - h}V${center + h}`;
  }
  return `<path d="${d}" stroke="#335b43" fill="none"/>`;
}

svg.innerHTML =
  lane(10, 1) + lane(27, 0.9) +
  '<path d="M0 10.500H791" stroke="#42765a" opacity=".5"/>' +
  '<path d="M0 23.500H791" stroke="#a8873d"/>' +
  '<path d="M19.500 0V34M39.500 0V34" stroke="#344f3d"/>' +
  '<path d="M0 22h2v3H0zM18 22h3v3h-3zM38 22h3v3h-3z" fill="#fff" stroke="#222" stroke-width=".7"/>';
```
